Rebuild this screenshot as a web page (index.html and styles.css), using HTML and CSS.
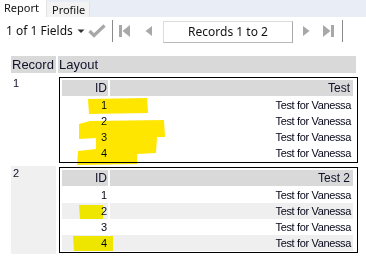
FILE: index.html
```html
<!DOCTYPE html>
<html>
<head>
<meta charset="utf-8">
<link rel="stylesheet" href="styles.css">
</head>
<body>
<div class="tabs">
  <div class="tab active">Report</div>
  <div class="tab">Profile</div>
</div>
<div class="toolbar">
  <span class="fields">1 of 1 Fields</span>
  <svg class="caret" width="8" height="6" viewBox="0 0 8 6"><path d="M0.5 1.5 H7.5 L4 5 Z" fill="#333"/></svg>
  <svg class="check" width="18" height="14" viewBox="0 0 18 14"><path d="M1.5 7 L6 11.5 L16.5 1.5" fill="none" stroke="#a8a8a8" stroke-width="3.2"/></svg>
  <span class="sep"></span>
  <svg class="first" width="11" height="12" viewBox="0 0 11 12"><rect x="0" y="0" width="3" height="12" fill="#a8a8a8"/><path d="M11 0 V12 L3.5 6 Z" fill="#a8a8a8"/></svg>
  <svg class="prev" width="8" height="10" viewBox="0 0 8 10"><path d="M7 0 V10 L0.5 5 Z" fill="#a8a8a8"/></svg>
  <div class="recbox">Records 1 to 2</div>
  <svg class="next" width="8" height="10" viewBox="0 0 8 10"><path d="M1 0 V10 L7.5 5 Z" fill="#a8a8a8"/></svg>
  <svg class="last" width="11" height="12" viewBox="0 0 11 12"><path d="M0 0 V12 L7.5 6 Z" fill="#a8a8a8"/><rect x="8" y="0" width="3" height="12" fill="#a8a8a8"/></svg>
  <span class="sep sep2"></span>
</div>
<div class="report">
  <div class="hcell">Record</div>
  <div class="hcell">Layout</div>

  <div class="label first-row">1</div>
  <div class="layout first-row">
    <div class="box">
      <div class="ih">ID</div><div class="ih">Test</div>
      <div class="d">1</div><div class="d">Test for Vanessa</div>
      <div class="d">2</div><div class="d">Test for Vanessa</div>
      <div class="d">3</div><div class="d">Test for Vanessa</div>
      <div class="d">4</div><div class="d">Test for Vanessa</div>
    </div>
  </div>

  <div class="label alt second-row">2</div>
  <div class="layout second-row">
    <div class="box">
      <div class="ih">ID</div><div class="ih">Test 2</div>
      <div class="d">1</div><div class="d">Test for Vanessa</div>
      <div class="d alt">2</div><div class="d alt">Test for Vanessa</div>
      <div class="d">3</div><div class="d">Test for Vanessa</div>
      <div class="d alt">4</div><div class="d alt">Test for Vanessa</div>
    </div>
  </div>
</div>
<svg class="marks" width="366" height="277" viewBox="0 0 366 277">
  <g fill="#ffe600">
    <path d="M88 99 L147 98 L148 113 L89 114 Z"/>
    <path d="M79 124 L90 121 L164 120 L165 137 L157 137 L156 153 L137 154 L137 164 L77 165 L78 151 L96 149 L96 138 L79 139 Z"/>
  </g>
  <g fill="#f0e600">
    <path d="M79 205 L103 205 L103 219 L80 219 Z"/>
    <path d="M73 236 L113 236 L113 251 L74 251 Z"/>
  </g>
</svg>
</body>
</html>
```
FILE: styles.css
```css
html, body {
  margin: 0;
  padding: 0;
  background: #ffffff;
}
body {
  width: 366px;
  height: 277px;
  overflow: hidden;
  position: relative;
  font-family: "Liberation Sans", Arial, sans-serif;
  color: #11112a;
}
.tabs {
  height: 17px;
  background: #e9edf6;
  display: flex;
  align-items: flex-end;
}
.tab {
  font-family: "Noto Sans", "Open Sans", sans-serif;
  font-size: 11px;
  color: #111;
  height: 15px;
  line-height: 15px;
  padding: 0 4px 0 5px;
  background: #f3f3f3;
  border-left: 1px solid #e2e2e2;
  border-right: 1px solid #e2e2e2;
}
.tab.active {
  background: #ffffff;
  height: 17px;
  line-height: 16px;
  padding: 0 7px 0 4px;
  border: none;
}
.toolbar {
  height: 27px;
  display: flex;
  align-items: center;
  padding-left: 6px;
  background: #ffffff;
}
.fields {
  font-family: "Noto Sans", "Open Sans", sans-serif;
  font-size: 12px;
  color: #111;
  width: 71px;
  white-space: nowrap;
}
.caret { display: block; }
.check { display: block; margin-left: 3px; }
.sep {
  width: 1px;
  height: 22px;
  background: #8a8a8a;
  margin-left: 6px;
}
.first { display: block; margin-left: 6px; }
.prev { display: block; margin-left: 15px; }
.recbox {
  margin-left: 10px;
  width: 128px;
  height: 20px;
  margin-top: 3px;
  border: 1px solid #dcdcdc;
  border-right-color: #a9a9a9;
  border-bottom-color: #b9b9b9;
  font-family: "Noto Sans", "Open Sans", sans-serif;
  font-size: 12px;
  line-height: 20px;
  color: #111;
  text-align: center;
}
.next { display: block; margin-left: 9px; }
.last { display: block; margin-left: 13px; }
.sep2 { margin-left: 8px; }
.report {
  margin-left: 11px;
  margin-top: 12px;
  display: grid;
  grid-template-columns: 45px 298px;
  column-gap: 2px;
  row-gap: 1px;
}
.hcell {
  background: #d9d9d9;
  height: 17px;
  line-height: 17px;
  font-size: 13px;
  padding-left: 1px;
}
.label {
  font-size: 11px;
  padding-left: 2px;
}
.label.first-row { padding-top: 3px; }
.label.second-row { padding-top: 1px; }
.label.alt { background: #f0f0f0; }
.layout.first-row { padding: 3px 0 2px 1px; }
.layout.second-row { padding: 1px 0 1px 1px; }
.box {
  border: 1px solid #000;
  padding: 2px 2px 1px 2px;
  width: 293px;
  display: grid;
  grid-template-columns: 46px 243px;
  column-gap: 2px;
  grid-auto-rows: 16px;
  grid-template-rows: 17px;
  row-gap: 0;
}
.ih {
  background: #d9d9d9;
  font-size: 12px;
  line-height: 17px;
  text-align: right;
  padding-right: 1px;
  margin-bottom: 1px;
  height: 16px;
}
.ih:nth-child(2) { padding-right: 3px; }
.d {
  font-size: 11px;
  line-height: 16px;
  text-align: right;
  padding-right: 1px;
  color: #050518;
}
.d:nth-child(even) {
  padding-right: 2px;
  letter-spacing: -0.35px;
}
.d.alt { background: #efefef; }
.marks {
  position: absolute;
  left: 0;
  top: 0;
  pointer-events: none;
  mix-blend-mode: darken;
}
```
